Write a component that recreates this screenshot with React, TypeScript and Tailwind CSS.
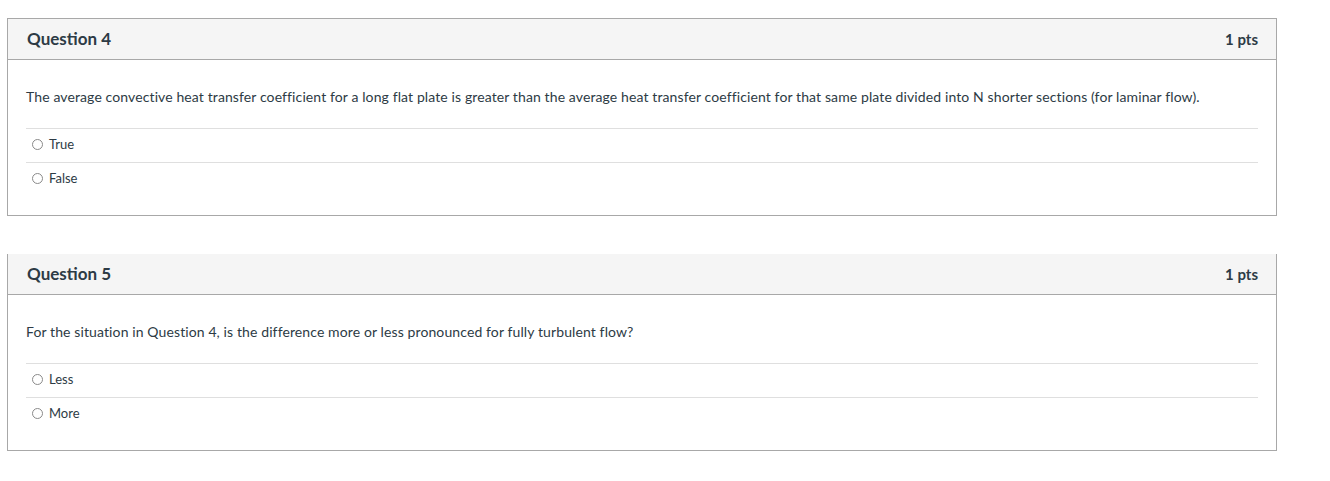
import React from "react";

const Radio = ({ label }: { label: string }) => (
  <div className="h-[34px] border-t border-[#dfdfdf] pl-[6px] pt-[7px]">
    <div className="flex h-[16px] items-center">
      <span className="mr-[6px] inline-block h-[11px] w-[11px] rounded-full border border-[#8a8a8a] bg-white" />
      <span className="text-[13px] leading-[16px] text-[#2d3b45]">{label}</span>
    </div>
  </div>
);

const Card = ({
  title,
  text,
  answers,
  topBorder,
  className,
}: {
  title: string;
  text: string;
  answers: string[];
  topBorder: boolean;
  className: string;
}) => (
  <div
    className={
      "ml-[7px] w-[1270px] border-x border-b border-[#a8a8a8] " +
      (topBorder ? "border-t " : "border-t-0 ") +
      className
    }
  >
    <div className="flex h-[41px] items-center justify-between border-b border-[#a8a8a8] bg-[#f5f5f5] pl-[19px] pr-[18px]">
      <span className="text-[17px] font-bold text-[#2d3b45]">{title}</span>
      <span className="text-[15px] font-bold text-[#2d3b45]">1 pts</span>
    </div>
    <div className="px-[18px] pt-[27px] pb-[19px]">
      <p className="text-[14px] leading-[20px] tracking-[0.11px] text-[#2d3b45]">{text}</p>
      <div className="mt-[21px]">
        {answers.map((a) => (
          <Radio key={a} label={a} />
        ))}
      </div>
    </div>
  </div>
);

export default function App() {
  return (
    <div
      className="h-[481px] w-[1330px] bg-white"
      style={{ fontFamily: "Lato, 'Liberation Sans', sans-serif" }}
    >
      <div className="pt-[18px]">
        <Card
          title="Question 4"
          text="The average convective heat transfer coefficient for a long flat plate is greater than the average heat transfer coefficient for that same plate divided into N shorter sections (for laminar flow)."
          answers={["True", "False"]}
          topBorder={true}
          className=""
        />
        <Card
          title="Question 5"
          text="For the situation in Question 4, is the difference more or less pronounced for fully turbulent flow?"
          answers={["Less", "More"]}
          topBorder={false}
          className="mt-[38px]"
        />
      </div>
    </div>
  );
}
